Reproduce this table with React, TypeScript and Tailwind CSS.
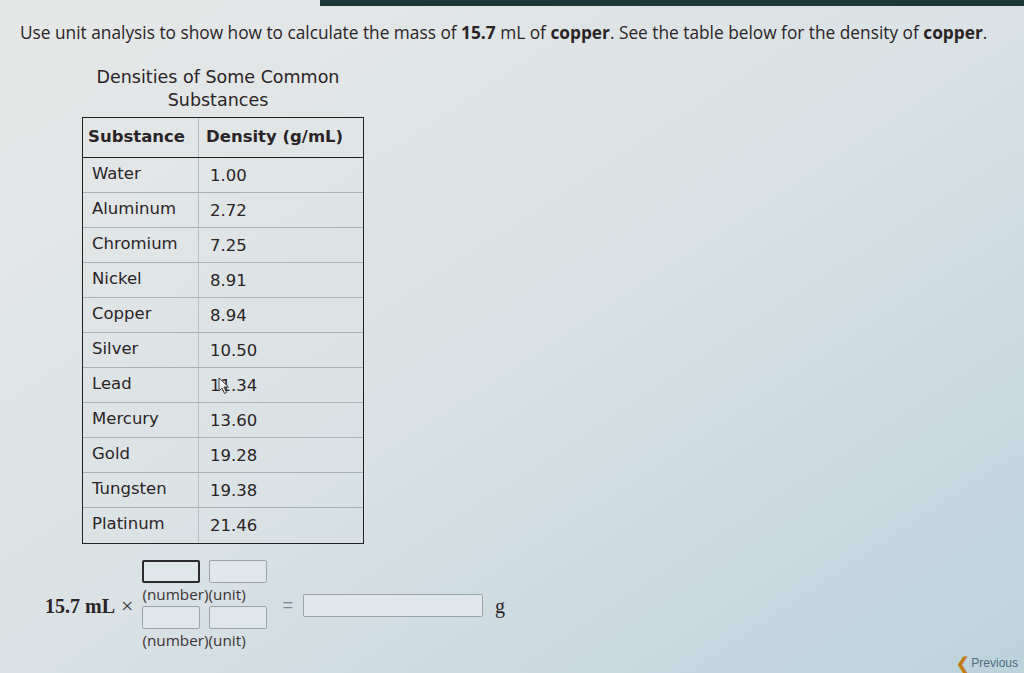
const densities = [
  { name: "Water", value: "1.00" },
  { name: "Aluminum", value: "2.72" },
  { name: "Chromium", value: "7.25" },
  { name: "Nickel", value: "8.91" },
  { name: "Copper", value: "8.94" },
  { name: "Silver", value: "10.50" },
  { name: "Lead", value: "11.34" },
  { name: "Mercury", value: "13.60" },
  { name: "Gold", value: "19.28" },
  { name: "Tungsten", value: "19.38" },
  { name: "Platinum", value: "21.46" },
];

function Cursor() {
  return (
    <svg width="12" height="18" viewBox="0 0 12 18" className="absolute left-[19px] top-[9px]">
      <path d="M1 1 L1 14 L4 11 L6.5 16.5 L8.5 15.5 L6 10 L10.5 10 Z" fill="#f4f6f6" stroke="#3a3a3a" strokeWidth="1" strokeLinejoin="round" />
    </svg>
  );
}

function DensityTable() {
  return (
    <div className="w-[282px] border-[1.5px] border-[#222] font-['DejaVu_Sans',sans-serif] text-[16.5px] text-[#2a2426]">
      <div className="grid grid-cols-[116px_1fr] h-[40px] border-b-[1.5px] border-[#222] font-bold">
        <div className="flex items-center px-[5px] border-r border-[#b7bfc2]">Substance</div>
        <div className="flex items-center px-[7px]">Density (g/mL)</div>
      </div>
      {densities.map((row, i) => (
        <div key={row.name} className={`grid grid-cols-[116px_1fr] h-[35px] ${i < densities.length - 1 ? "border-b border-[#a9b2b5]" : ""}`}>
          <div className="flex items-center px-[9px] pb-[2px] border-r border-[#b7bfc2]">{row.name}</div>
          <div className="relative flex items-center px-[11px] pt-[2px]">
            {row.value}
            {row.name === "Lead" && <Cursor />}
          </div>
        </div>
      ))}
    </div>
  );
}

function Box({ dark, w = "w-[58px]" }: { dark?: boolean; w?: string }) {
  return <div className={`${w} h-[23px] rounded-[2px] bg-[#dfe7ea] ${dark ? "border-2 border-[#2b2b2b]" : "border border-[#9aa4a8]"}`} />;
}

export default function App() {
  return (
    <div className="w-[1024px] h-[673px] overflow-hidden bg-gradient-to-br from-[#e6e8e7] via-[#dae2e5] to-[#bcd3dc] flex flex-col">
      <div className="h-[6px] ml-[320px] bg-[#1c3838] shrink-0" />

      <p className="mt-[15px] pl-[20px] font-['Open_Sans',sans-serif] text-[17.3px] leading-[24px] text-[#2a2426] whitespace-nowrap">
        Use unit analysis to show how to calculate the mass of <b>15.7</b> mL of <b>copper</b>. See the table below for the density of <b>copper</b>.
      </p>

      <div className="ml-[82px] mt-[21px] flex flex-col">
        <div className="w-[282px] text-center font-['DejaVu_Sans',sans-serif] text-[17.5px] leading-[23px] text-[#2a2426] pr-[10px]">
          Densities of Some Common
          <br />
          Substances
        </div>
        <div className="mt-[5px]">
          <DensityTable />
        </div>
      </div>

      <div className="ml-[45px] mt-[16px] flex items-center">
        <span className="font-['Liberation_Serif',serif] text-[20px] font-bold text-[#2a2426]">15.7 mL</span>
        <span className="ml-[6px] font-['Liberation_Serif',serif] text-[22px] text-[#3a3a3a]">×</span>
        <div className="ml-[9px] flex flex-col">
          <div className="flex gap-[9px]">
            <Box dark />
            <Box />
          </div>
          <div className="h-[23px] pt-[1px] font-['Open_Sans',sans-serif] text-[15.3px] leading-[20px] text-[#3c3436]">(number)(unit)</div>
          <div className="flex gap-[9px]">
            <Box />
            <Box />
          </div>
          <div className="h-[22px] pt-[1px] font-['Open_Sans',sans-serif] text-[15.3px] leading-[20px] text-[#3c3436]">(number)(unit)</div>
        </div>
        <span className="ml-[15px] font-['Liberation_Sans',sans-serif] text-[18px] text-[#7d8a8e]">=</span>
        <div className="ml-[10px]">
          <Box w="w-[180px]" />
        </div>
        <span className="ml-[12px] font-['Liberation_Serif',serif] text-[20px] text-[#2a2426]">g</span>
      </div>

      <div className="mt-auto mb-[1px] mr-[6px] self-end flex items-center gap-[2px] font-['Liberation_Sans',sans-serif] text-[12px] text-[#4e6b80]">
        <span className="text-[#c47a10] font-bold text-[16px] leading-[15px]">❮</span>
        Previous
      </div>
    </div>
  );
}
